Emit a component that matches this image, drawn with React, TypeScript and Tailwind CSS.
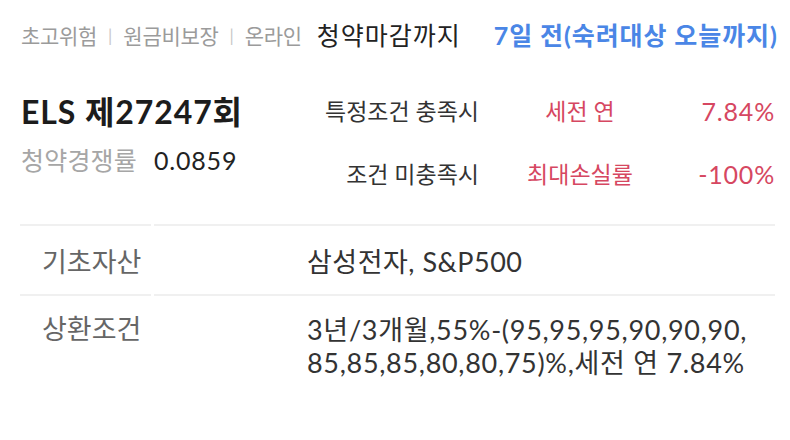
const FONT = "font-['Lato','Noto_Sans_CJK_KR',sans-serif]";

const App = () => {
  const tags = ["초고위험", "원금비보장", "온라인"];

  return (
    <div className={`w-[790px] h-[440px] bg-white ${FONT} overflow-hidden`}>
      {/* 상단 태그 */}
      <div className="flex items-center h-[36px] mt-[18px] pl-[21px] whitespace-nowrap">
        {tags.map((t, i) => (
          <div key={t} className="flex items-center">
            {i > 0 && <span className="mx-[11px] text-[17px] text-[#c8c8c8]">|</span>}
            <span className="text-[21px] text-[#9b9b9b] tracking-[-0.3px]">{t}</span>
          </div>
        ))}
        <span className="ml-[15px] text-[25px] text-[#222] tracking-[1px]">청약마감까지</span>
        <span className="ml-[33px] text-[25px] font-bold text-[#4a86e6] tracking-[0.9px]">7일 전(숙려대상 오늘까지)</span>
      </div>

      {/* 상품 요약 */}
      <div className="flex mt-[38px] pl-[21px] pr-[15px] whitespace-nowrap">
        <div className="w-[280px]">
          <div className="text-[32px] font-bold text-[#1c1c1c] leading-[40px] tracking-[0.9px]">ELS 제27247회</div>
          <div className="flex items-center mt-[10px]">
            <span className="text-[25px] text-[#a6a6a6] tracking-[0.2px]">청약경쟁률</span>
            <span className="ml-[17px] text-[25px] text-[#222] tracking-[0.8px]">0.0859</span>
          </div>
        </div>
        <div className="flex-1 grid grid-cols-[178px_1fr_120px] gap-y-[23px] mt-[-1px]">
          <div className="text-right text-[23px] text-[#333] leading-[40px]">특정조건 충족시</div>
          <div className="text-center text-[23px] text-[#d64761] leading-[40px] pl-[26px]">세전 연</div>
          <div className="text-right text-[25px] text-[#d64761] leading-[40px] tracking-[0.8px]">7.84%</div>
          <div className="text-right text-[23px] text-[#333] leading-[40px]">조건 미충족시</div>
          <div className="text-center text-[23px] text-[#d64761] leading-[40px] pl-[26px]">최대손실률</div>
          <div className="text-right text-[25px] text-[#d64761] leading-[40px] tracking-[0.8px]">-100%</div>
        </div>
      </div>

      {/* 상세 표 */}
      <div className="grid grid-cols-[131px_1fr] gap-x-[3px] mt-[30px] ml-[20px] mr-[15px] whitespace-nowrap">
        <div className="border-t-2 border-[#f0f0f0] pl-[22px] pt-[20px] pb-[16px] text-[27px] text-[#666] leading-[32px]">기초자산</div>
        <div className="border-t-2 border-[#f0f0f0] pl-[153px] pt-[20px] pb-[16px] text-[27px] text-[#333] leading-[32px] tracking-[0.5px]">삼성전자, S&amp;P500</div>
        <div className="border-t-2 border-[#f0f0f0] pl-[22px] pt-[17px] text-[27px] text-[#666] leading-[32px]">상환조건</div>
        <div className="border-t-2 border-[#f0f0f0] pl-[153px] pt-[17px] text-[27px] text-[#333] leading-[33px] tracking-[0.7px]">
          3년/3개월,55%-(95,95,95,90,90,90,
          <br />
          85,85,85,80,80,75)%,세전 연 7.84%
        </div>
      </div>
    </div>
  );
};

export default App;
